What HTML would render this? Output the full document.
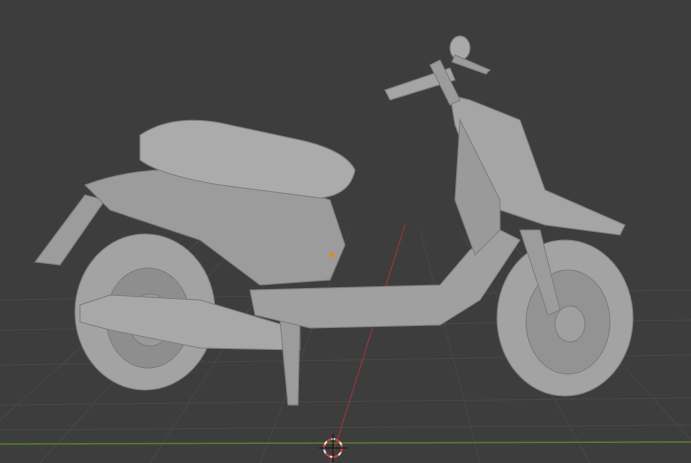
<!DOCTYPE html>
<html><head><meta charset="utf-8"><style>
html,body{margin:0;padding:0;background:#3d3d3d;width:691px;height:463px;overflow:hidden}
</style></head><body>
<svg width="691" height="463" viewBox="0 0 691 463" xmlns="http://www.w3.org/2000/svg">
<rect width="691" height="463" fill="#3d3d3d"/>
<g stroke="#474747" stroke-width="1" fill="none">
<path d="M0 300 L691 290 M0 330 L691 320 M0 365 L691 355 M0 405 L691 398 M0 430 L691 425"/>
<path d="M40 463 L250 230 M150 463 L300 230 M260 463 L350 230 M480 463 L420 230 M590 463 L460 230 M691 440 L500 230 M0 420 L200 240"/>
</g>
<line x1="0" y1="444" x2="691" y2="442" stroke="#5a7a2a" stroke-width="1.5"/>
<line x1="405" y1="225" x2="330" y2="463" stroke="#8a3a3a" stroke-width="1.2"/>
<g fill="#9c9c9c" stroke="#7e7e7e" stroke-width="1">
<!-- rear fender/mudflap -->
<path d="M35 262 L85 195 L105 200 L60 265 Z"/>
<!-- rear body -->
<path d="M85 185 Q150 160 250 175 L330 200 L345 245 L330 280 L260 285 L200 240 L110 210 Z"/>
<!-- rear wheel -->
<ellipse cx="145" cy="312" rx="70" ry="78" fill="#a3a3a3"/>
<ellipse cx="148" cy="318" rx="42" ry="50" fill="#8e8e8e"/>
<ellipse cx="150" cy="320" rx="22" ry="26" fill="#9a9a9a"/>
<!-- exhaust -->
<path d="M80 305 L110 295 L200 300 L300 330 L300 350 L200 348 L110 330 L80 322 Z" fill="#a8a8a8"/>
<!-- stand -->
<path d="M280 320 L300 320 L298 405 L288 405 Z"/>
<!-- floorboard -->
<path d="M250 290 L440 285 L470 250 L500 230 L520 240 L480 300 L440 325 L310 328 L255 315 Z" fill="#a0a0a0"/>
<!-- front wheel -->
<ellipse cx="565" cy="318" rx="68" ry="78" fill="#a3a3a3"/>
<ellipse cx="568" cy="322" rx="42" ry="52" fill="#939393"/>
<ellipse cx="570" cy="324" rx="15" ry="18" fill="#a0a0a0"/>
<!-- fork -->
<path d="M520 230 L540 230 L560 310 L548 315 Z"/>
<!-- front shield -->
<path d="M450 95 L470 100 L520 120 L545 190 L625 225 L620 235 L545 225 L500 210 L480 190 L455 125 Z" fill="#a5a5a5"/>
<path d="M460 120 L500 200 L500 230 L475 255 L455 200 Z" fill="#9a9a9a"/>
<!-- seat -->
<path d="M140 135 Q175 112 230 125 L300 140 Q345 150 355 170 Q350 195 320 198 L220 185 Q160 175 140 160 Z" fill="#ababab"/>
<!-- handlebar -->
<path d="M385 90 L450 68 L455 80 L390 100 Z" fill="#a5a5a5"/>
<path d="M440 60 L460 100 L450 105 L430 65 Z"/>
<ellipse cx="460" cy="48" rx="10" ry="12" fill="#aaa"/>
<path d="M455 55 L490 70 L486 74 L452 62 Z"/>
</g>
<circle cx="332" cy="255" r="2.5" fill="#e08a20"/>
<g>
<circle cx="333" cy="448" r="9" fill="none" stroke="#d04040" stroke-width="2" stroke-dasharray="5 4"/>
<circle cx="333" cy="448" r="9" fill="none" stroke="#ddd" stroke-width="2" stroke-dasharray="4 5" stroke-dashoffset="4.5"/>
<path d="M333 434 V462 M319 448 H347" stroke="#111" stroke-width="1"/>
</g>
</svg>
</body></html>
